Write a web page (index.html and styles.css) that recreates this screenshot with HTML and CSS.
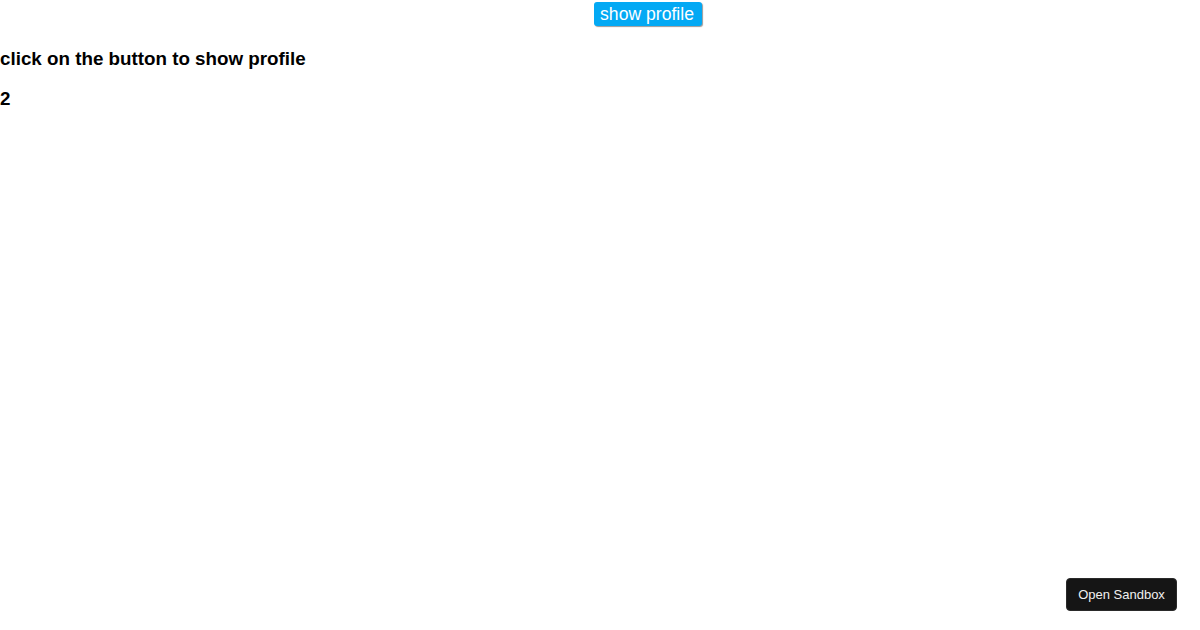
FILE: index.html
```html
<!DOCTYPE html>
<html>
<head>
<meta charset="utf-8">
<link rel="stylesheet" href="styles.css">
</head>
<body>
<div class="top">
  <button class="profile-btn">show profile</button>
</div>
<h3 class="msg">click on the button to show profile</h3>
<h3 class="msg">2</h3>
<a class="sandbox">Open Sandbox</a>
</body>
</html>
```
FILE: styles.css
```css
html, body {
  margin: 0;
  padding: 0;
  background: #fff;
  font-family: "Liberation Sans", Arial, sans-serif;
}
.top {
  display: flex;
  justify-content: center;
  padding-top: 2px;
  padding-bottom: 3px;
  padding-left: 96px;
}
.profile-btn {
  font-family: "Liberation Sans", Arial, sans-serif;
  font-size: 17.6px;
  line-height: 21px;
  color: #fff;
  background: #03a9f4;
  border: none;
  border-radius: 3px;
  padding: 2px 8px 1px 6px;
  box-shadow: 1px 1px 1px #9a9a9a;
  cursor: pointer;
}
.msg {
  font-size: 18.8px;
  font-weight: bold;
  margin: 18.72px 0;
  color: #000;
}
.sandbox {
  position: fixed;
  right: 23px;
  bottom: 19px;
  width: 111px;
  height: 33px;
  box-sizing: border-box;
  display: flex;
  align-items: center;
  justify-content: center;
  background: #151515;
  color: #f0f0f0;
  border-radius: 4px;
  font-size: 13px;
  font-family: "Liberation Sans", Arial, sans-serif;
  border: 1px solid #2a2a2a;
}
```
